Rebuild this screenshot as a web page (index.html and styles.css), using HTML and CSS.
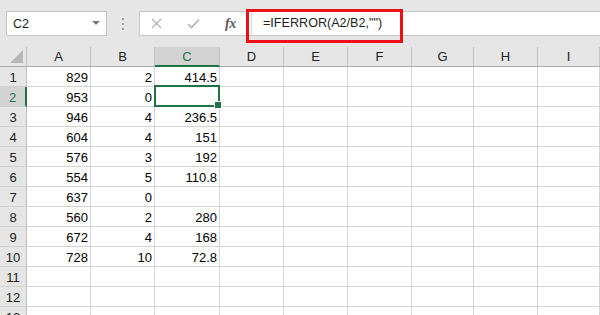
FILE: index.html
```html
<!DOCTYPE html>
<html>
<head>
<meta charset="utf-8">
<link rel="stylesheet" href="styles.css">
</head>
<body>
<div class="app">
  <div class="toolbar">
    <div class="namebox">
      <span class="nb-text">C2</span>
      <svg class="nb-arrow" width="8" height="4" viewBox="0 0 8 4"><polygon points="0,0 8,0 4,4" fill="#7a7a7a"/></svg>
    </div>
    <div class="grip"><span></span><span></span><span></span></div>
    <div class="fbar">
      <div class="ficons">
        <svg class="ic-x" width="11" height="11" viewBox="0 0 11 11"><path d="M1 1 L10 10 M10 1 L1 10" stroke="#b3b3b3" stroke-width="1.3" fill="none"/></svg>
        <svg class="ic-ok" width="13" height="11" viewBox="0 0 13 11"><path d="M1 6 L4.5 9.5 L12 1.5" stroke="#b3b3b3" stroke-width="1.6" fill="none"/></svg>
        <span class="ic-fx">fx</span>
      </div>
      <div class="finput">=IFERROR(A2/B2,"")</div>
      <div class="redbox"></div>
    </div>
  </div>
  <div class="sheet">
    <div class="hd corner"><svg width="13" height="13" viewBox="0 0 13 13"><polygon points="13,0 13,13 0,13" fill="#b8b8b8"/></svg></div>
    <div class="hd">A</div><div class="hd">B</div><div class="hd hd-sel">C</div><div class="hd">D</div><div class="hd">E</div><div class="hd">F</div><div class="hd">G</div><div class="hd">H</div><div class="hd">I</div>

    <div class="rh">1</div><div class="c">829</div><div class="c">2</div><div class="c">414.5</div><div class="c"></div><div class="c"></div><div class="c"></div><div class="c"></div><div class="c"></div><div class="c"></div>
    <div class="rh rh-sel">2</div><div class="c">953</div><div class="c">0</div><div class="c sel"></div><div class="c"></div><div class="c"></div><div class="c"></div><div class="c"></div><div class="c"></div><div class="c"></div>
    <div class="rh">3</div><div class="c">946</div><div class="c">4</div><div class="c">236.5</div><div class="c"></div><div class="c"></div><div class="c"></div><div class="c"></div><div class="c"></div><div class="c"></div>
    <div class="rh">4</div><div class="c">604</div><div class="c">4</div><div class="c">151</div><div class="c"></div><div class="c"></div><div class="c"></div><div class="c"></div><div class="c"></div><div class="c"></div>
    <div class="rh">5</div><div class="c">576</div><div class="c">3</div><div class="c">192</div><div class="c"></div><div class="c"></div><div class="c"></div><div class="c"></div><div class="c"></div><div class="c"></div>
    <div class="rh">6</div><div class="c">554</div><div class="c">5</div><div class="c">110.8</div><div class="c"></div><div class="c"></div><div class="c"></div><div class="c"></div><div class="c"></div><div class="c"></div>
    <div class="rh">7</div><div class="c">637</div><div class="c">0</div><div class="c"></div><div class="c"></div><div class="c"></div><div class="c"></div><div class="c"></div><div class="c"></div><div class="c"></div>
    <div class="rh">8</div><div class="c">560</div><div class="c">2</div><div class="c">280</div><div class="c"></div><div class="c"></div><div class="c"></div><div class="c"></div><div class="c"></div><div class="c"></div>
    <div class="rh">9</div><div class="c">672</div><div class="c">4</div><div class="c">168</div><div class="c"></div><div class="c"></div><div class="c"></div><div class="c"></div><div class="c"></div><div class="c"></div>
    <div class="rh">10</div><div class="c">728</div><div class="c">10</div><div class="c">72.8</div><div class="c"></div><div class="c"></div><div class="c"></div><div class="c"></div><div class="c"></div><div class="c"></div>
    <div class="rh">11</div><div class="c"></div><div class="c"></div><div class="c"></div><div class="c"></div><div class="c"></div><div class="c"></div><div class="c"></div><div class="c"></div><div class="c"></div>
    <div class="rh">12</div><div class="c"></div><div class="c"></div><div class="c"></div><div class="c"></div><div class="c"></div><div class="c"></div><div class="c"></div><div class="c"></div><div class="c"></div>
    <div class="rh">13</div><div class="c"></div><div class="c"></div><div class="c"></div><div class="c"></div><div class="c"></div><div class="c"></div><div class="c"></div><div class="c"></div><div class="c"></div>
  </div>
</div>
</body>
</html>
```

FILE: styles.css
```css
* { box-sizing: border-box; }
html, body { margin: 0; padding: 0; }
body {
  width: 600px;
  height: 315px;
  overflow: hidden;
  background: #e6e6e6;
  font-family: "Liberation Sans", Arial, sans-serif;
  color: #000;
}
.app { width: 600px; height: 315px; overflow: hidden; }

.toolbar {
  height: 47px;
  padding-top: 11px;
  display: flex;
  align-items: flex-start;
}
.namebox {
  margin-left: 6px;
  width: 101px;
  height: 25px;
  background: #fff;
  border: 1px solid #c6c6c6;
  display: flex;
  align-items: center;
  justify-content: space-between;
  padding: 0 6px 0 6px;
}
.nb-text { font-size: 12.5px; color: #1e1e1e; }
.nb-arrow { display: block; margin-top: -2px; }
.grip {
  width: 32px;
  height: 25px;
  display: flex;
  flex-direction: column;
  align-items: center;
  justify-content: center;
  gap: 3px;
}
.grip span { width: 2px; height: 2px; background: #9d9d9d; display: block; }

.fbar {
  flex: 1;
  height: 25px;
  background: #fff;
  border: 1px solid #c6c6c6;
  border-right: none;
  display: flex;
  position: relative;
}
.ficons {
  width: 111px;
  display: flex;
  align-items: center;
  padding-left: 11px;
}
.ic-x { display: block; }
.ic-ok { display: block; margin-left: 25px; }
.ic-fx {
  margin-left: 25px;
  font-family: "Liberation Serif", serif;
  font-style: italic;
  font-weight: bold;
  font-size: 14px;
  color: #5a5a5a;
  letter-spacing: -0.5px;
}
.finput {
  flex: 1;
  border-left: 1px solid #d6d6d6;
  padding-left: 11px;
  font-size: 12.6px;
  line-height: 23px;
  color: #1e1e1e;
}
.redbox {
  position: absolute;
  left: 106px;
  top: -3px;
  width: 157px;
  height: 34px;
  border: 3px solid #ec1117;
}

.sheet {
  display: grid;
  grid-template-columns: 27px 64px 64px 65px 64px 64px 64px 62px 64px 1fr;
  grid-auto-rows: 20px;
  background: #fff;
  font-size: 13px;
}
.hd {
  background: #e6e6e6;
  border-right: 1px solid #c3c3c3;
  border-bottom: 1px solid #ababab;
  text-align: center;
  line-height: 19px;
  color: #222;
}
.corner { display: flex; align-items: flex-end; justify-content: flex-end; padding: 0 3px 3px 0; }
.corner svg { display: block; }
.hd-sel {
  background: #d3d3d3;
  color: #217346;
  border-bottom: 2px solid #217346;
}
.rh {
  background: #e6e6e6;
  border-right: 1px solid #bdbdbd;
  border-bottom: 1px solid #d0d0d0;
  text-align: center;
  padding-top: 3px;
  line-height: 16px;
  color: #222;
}
.rh-sel {
  background: #d3d3d3;
  color: #217346;
  border-right: 2px solid #217346;
}
.c {
  border-right: 1px solid #d4d4d4;
  border-bottom: 1px solid #d4d4d4;
  text-align: right;
  padding: 3px 2px 0 0;
  line-height: 16px;
}
.sel { position: relative; }
.sel::after {
  content: "";
  position: absolute;
  left: -1px;
  top: -2px;
  right: -1px;
  bottom: -1px;
  border: 2px solid #217346;
}
.sel::before {
  content: "";
  position: absolute;
  right: -3px;
  bottom: -3px;
  width: 6px;
  height: 6px;
  background: #217346;
  border: 1px solid #fff;
  z-index: 2;
}
```
